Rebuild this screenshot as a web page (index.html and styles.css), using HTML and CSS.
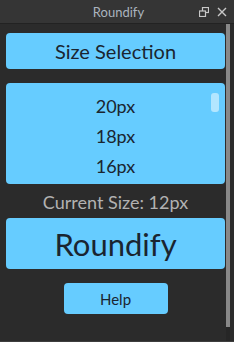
FILE: index.html
```html
<!DOCTYPE html>
<html lang="en">
<head>
    <meta charset="UTF-8">
    <title>Roundify</title>
    <link rel="stylesheet" href="styles.css">
</head>
<body>
    <div class="widget">
        <div class="title-bar">
            <span class="title">Roundify</span>
            <div class="title-icons">
                <svg width="10" height="10" viewBox="0 0 10 10" class="icon">
                    <rect x="3.5" y="0.5" width="6" height="5" fill="none" stroke="#c8c8c8" stroke-width="1.2"/>
                    <rect x="0.5" y="4" width="6" height="5.5" fill="#353535" stroke="#c8c8c8" stroke-width="1.2"/>
                </svg>
                <svg width="10" height="10" viewBox="0 0 10 10" class="icon">
                    <path d="M1 1 L9 9 M9 1 L1 9" stroke="#c8c8c8" stroke-width="1.4"/>
                </svg>
            </div>
        </div>
        <div class="main">
            <div class="content">
                <button class="btn btn-header">Size Selection</button>
                <div class="size-list">
                    <div class="size-item">20px</div>
                    <div class="size-item">18px</div>
                    <div class="size-item">16px</div>
                    <div class="list-thumb"></div>
                </div>
                <div class="current-size">Current Size: 12px</div>
                <button class="btn btn-roundify">Roundify</button>
                <button class="btn btn-help">Help</button>
            </div>
            <div class="scrollbar">
                <div class="scroll-thumb"></div>
            </div>
        </div>
    </div>
</body>
</html>
```

FILE: styles.css
```css
body {
    margin: 0;
    padding: 0;
    background-color: #2b2b2b;
    font-family: 'Lato', 'Open Sans', sans-serif;
}

.widget {
    width: 234px;
    height: 342px;
    display: flex;
    flex-direction: column;
    border-bottom: 1px solid #3e3e3e;
    box-sizing: border-box;
}

.title-bar {
    height: 24px;
    background-color: #353535;
    border-bottom: 1px solid #222;
    box-sizing: border-box;
    display: flex;
    align-items: center;
    justify-content: center;
    position: relative;
}

.title {
    color: #aab4bf;
    font-size: 13px;
    margin-left: 3px;
}

.title-icons {
    position: absolute;
    right: 7px;
    top: 7px;
    display: flex;
    gap: 8px;
}

.main {
    flex: 1;
    display: flex;
}

.content {
    flex: 1;
    padding: 9px 1px 0 6px;
    display: flex;
    flex-direction: column;
    align-items: center;
}

.btn {
    background-color: #66ccff;
    color: #1a2530;
    border: none;
    border-radius: 4px;
    font-family: 'Lato', 'Open Sans', sans-serif;
    padding: 0;
    width: 100%;
    cursor: pointer;
}

.btn-header {
    height: 36px;
    font-size: 20px;
}

.size-list {
    margin-top: 14px;
    width: 100%;
    height: 101px;
    background-color: #66ccff;
    border-radius: 4px;
    padding-top: 8px;
    box-sizing: border-box;
    position: relative;
}

.size-item {
    height: 30px;
    line-height: 30px;
    text-align: center;
    font-size: 18px;
    color: #1a2530;
}

.list-thumb {
    position: absolute;
    right: 6px;
    top: 10px;
    width: 8px;
    height: 19px;
    border-radius: 3px;
    background-color: #b3e6ff;
}

.current-size {
    margin-top: 6px;
    height: 28px;
    line-height: 24px;
    color: #b2b2b2;
    font-size: 18px;
}

.btn-roundify {
    height: 51px;
    font-size: 31px;
}

.btn-help {
    margin-top: 14px;
    width: 104px;
    height: 31px;
    font-size: 15px;
}

.scrollbar {
    width: 4px;
    margin-right: 4px;
    background-color: #262626;
}

.scroll-thumb {
    height: 303px;
    background-color: #888;
}
```
